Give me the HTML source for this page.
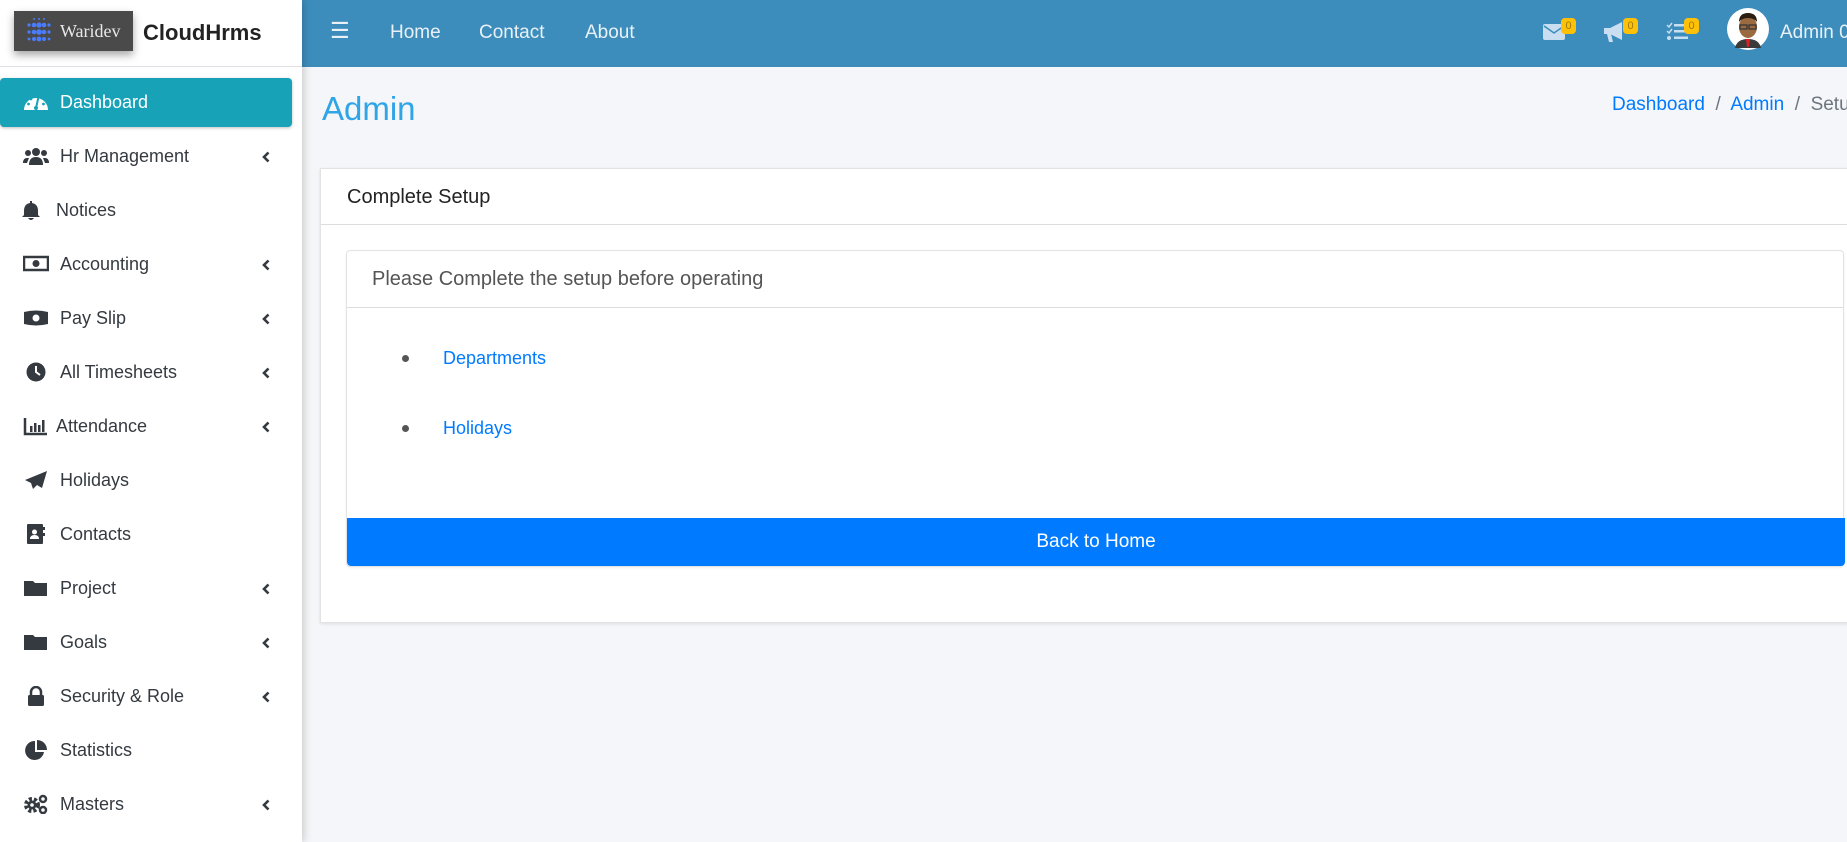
<!DOCTYPE html>
<html><head><meta charset="utf-8"><style>
*{box-sizing:border-box;margin:0;padding:0}
body{width:1847px;height:842px;overflow:hidden;background:#f4f6f9;font-family:"Liberation Sans",sans-serif;position:relative;color:#343a40}
.side{position:absolute;left:0;top:0;width:302px;height:842px;background:#fff;box-shadow:2px 0 8px rgba(0,0,0,.18);z-index:2}
.brand{height:67px;border-bottom:1px solid #dee2e6;position:relative}
.logo{position:absolute;left:14px;top:11px;width:119px;height:40px;background:#4a4a4a;box-shadow:0 4px 8px rgba(0,0,0,.35);color:#e8e8e8;font-family:"Liberation Serif",serif;font-size:18px;line-height:40px;padding-left:46px}
.logo svg{position:absolute;left:10px;top:6px}
.bname{position:absolute;left:143px;top:20px;font-size:22px;font-weight:bold;color:#222}
.item{position:absolute;left:0;width:292px;height:49px;font-size:18px;line-height:49px;color:#343a40}
.item .ic{position:absolute;left:23px;top:14px;width:26px;height:20px}
.item .t{position:absolute;left:60px}
.item .ch{position:absolute;left:262px;top:19px;width:8px;height:12px}
.active{background:#17a2b8;color:#fff;border-radius:4px;box-shadow:0 1px 3px rgba(0,0,0,.25)}
.nav{position:absolute;left:302px;top:0;right:0;height:67px;background:#3d8dbc;color:#eef;font-size:19px}
.nav span{position:absolute;top:22px;color:#e9f1f7;white-space:nowrap}
.badge{position:absolute;background:#ffc107;color:#9a7a10;font-size:11px;width:15px;height:16px;border-radius:4px;text-align:center;line-height:16px}
h1{position:absolute;left:322px;top:90px;font-weight:normal;font-size:33px;color:#2fa4e7}
.bc{position:absolute;left:1612px;top:94px;font-size:19px;color:#6c757d;white-space:nowrap}
.bc a{color:#007bff;text-decoration:none}
.card{position:absolute;left:320px;top:168px;width:1540px;height:455px;background:#fff;border:1px solid #e3e3e3;box-shadow:0 1px 3px rgba(0,0,0,.1)}
.ch1{height:56px;border-bottom:1px solid #ddd;padding:17px 26px;font-size:20px;color:#222}
.inner{position:absolute;left:25px;top:81px;width:1498px;height:317px;border:1px solid #e3e3e3;border-radius:4px;box-shadow:0 1px 2px rgba(0,0,0,.06)}
.ih{height:57px;border-bottom:1px solid #ddd;padding:17px 25px;font-size:20px;color:#555}
.li{position:absolute;left:96px;font-size:18px;color:#007bff}
.dot{position:absolute;left:55px;width:7px;height:7px;border-radius:50%;background:#555}
.btn{position:absolute;left:0;top:267px;width:1498px;height:48px;background:#007bff;border-radius:0 0 4px 4px;color:#fff;text-align:center;line-height:48px;font-size:19px}
</style></head><body>
<svg width="0" height="0" style="position:absolute"><defs><symbol id="chev" viewBox="0 0 8 12"><path d="M6.5 1.5L2 6l4.5 4.5" stroke="#343a40" stroke-width="2.6" fill="none"/></symbol></defs></svg>
<div class="side">
 <div class="brand"><div class="logo"><svg width="30" height="28" viewBox="0 0 30 28"><g fill="#4a7cff"><circle cx="5" cy="8" r="1.6"/><circle cx="10" cy="8" r="2.3"/><circle cx="15" cy="8" r="2.6"/><circle cx="20" cy="8" r="2.3"/><circle cx="25" cy="8" r="1.6"/><circle cx="5" cy="15" r="1.6"/><circle cx="10" cy="15" r="2.3"/><circle cx="15" cy="15" r="2.8"/><circle cx="20" cy="15" r="2.3"/><circle cx="25" cy="15" r="1.6"/><circle cx="5" cy="22" r="1.4"/><circle cx="10" cy="22" r="2"/><circle cx="15" cy="22" r="2.4"/><circle cx="20" cy="22" r="2"/><circle cx="25" cy="22" r="1.4"/><circle cx="10" cy="2" r="1"/><circle cx="15" cy="2" r="1"/><circle cx="20" cy="2" r="1"/></g></svg>Waridev</div><div class="bname">CloudHrms</div></div>
 <div class="item active" style="top:78px"><svg class="ic" viewBox="0 0 26 20"><path d="M1 18A12 12 0 1 1 25 18Z" fill="#fff"/><path d="M13 16L15.5 5" stroke="#17a2b8" stroke-width="2"/><circle cx="13" cy="16" r="2" fill="#17a2b8"/><circle cx="5.5" cy="12" r="1.4" fill="#17a2b8"/><circle cx="8" cy="7" r="1.4" fill="#17a2b8"/><circle cx="20.5" cy="12" r="1.4" fill="#17a2b8"/></svg><span class="t">Dashboard</span></div>
 <div class="item" style="top:132px"><svg class="ic" viewBox="0 0 26 20"><g fill="#343a40"><circle cx="13" cy="6" r="4"/><circle cx="5" cy="7" r="3"/><circle cx="21" cy="7" r="3"/><path d="M6 19q0-8 7-8t7 8z"/><path d="M0 17q0-6 6-5l-2 5zM26 17q0-6-6-5l2 5z"/></g></svg><span class="t">Hr Management</span><svg class="ch"><use href="#chev"/></svg></div>
 <div class="item" style="top:186px"><svg class="ic" viewBox="0 0 26 20" style="left:20px"><path d="M10 1h2v2q6 1 6 8v4l2 2H2l2-2v-4q0-7 6-8z M8 18h6q-3 4-6 0z" fill="#343a40"/></svg><span class="t" style="left:56px">Notices</span></div>
 <div class="item" style="top:240px"><svg class="ic" viewBox="0 0 26 20"><rect x="1" y="3" width="24" height="13" fill="none" stroke="#343a40" stroke-width="2.5"/><circle cx="13" cy="9.5" r="3.5" fill="#343a40"/></svg><span class="t">Accounting</span><svg class="ch"><use href="#chev"/></svg></div>
 <div class="item" style="top:294px"><svg class="ic" viewBox="0 0 26 20"><path d="M1 4q12 -3 24 0v12q-12 3-24 0z" fill="#343a40"/><circle cx="13" cy="10" r="3.5" fill="#fff"/></svg><span class="t">Pay Slip</span><svg class="ch"><use href="#chev"/></svg></div>
 <div class="item" style="top:348px"><svg class="ic" viewBox="0 0 26 20"><circle cx="13" cy="10" r="9.5" fill="#343a40"/><path d="M13 4v6l4 3" stroke="#fff" stroke-width="2" fill="none"/></svg><span class="t">All Timesheets</span><svg class="ch"><use href="#chev"/></svg></div>
 <div class="item" style="top:402px"><svg class="ic" viewBox="0 0 26 20"><path d="M2 2v16h22" stroke="#343a40" stroke-width="2.5" fill="none"/><g fill="#343a40"><rect x="7" y="10" width="2.5" height="6"/><rect x="11" y="7" width="2.5" height="9"/><rect x="15" y="9" width="2.5" height="7"/><rect x="19" y="4" width="2.5" height="12"/></g></svg><span class="t" style="left:56px">Attendance</span><svg class="ch"><use href="#chev"/></svg></div>
 <div class="item" style="top:456px"><svg class="ic" viewBox="0 0 26 20"><path d="M24 1L2 10l6 3 2 6 4-4 5 3z" fill="#343a40"/></svg><span class="t">Holidays</span></div>
 <div class="item" style="top:510px"><svg class="ic" viewBox="0 0 26 20"><rect x="4" y="0" width="16" height="20" rx="1" fill="#343a40"/><circle cx="11.5" cy="8" r="2.5" fill="#fff"/><path d="M7 15q0-4 4.5-4t4.5 4z" fill="#fff"/><rect x="20" y="3" width="2" height="3" fill="#343a40"/><rect x="20" y="9" width="2" height="3" fill="#343a40"/></svg><span class="t">Contacts</span></div>
 <div class="item" style="top:564px"><svg class="ic" viewBox="0 0 26 20"><path d="M1 3h9l2 2h12v13H1z" fill="#343a40"/></svg><span class="t">Project</span><svg class="ch"><use href="#chev"/></svg></div>
 <div class="item" style="top:618px"><svg class="ic" viewBox="0 0 26 20"><path d="M1 3h9l2 2h12v13H1z" fill="#343a40"/></svg><span class="t">Goals</span><svg class="ch"><use href="#chev"/></svg></div>
 <div class="item" style="top:672px"><svg class="ic" viewBox="0 0 26 20"><path d="M8 9V6a5 5 0 0 1 10 0v3" stroke="#343a40" stroke-width="2.5" fill="none"/><rect x="5" y="9" width="16" height="11" rx="1.5" fill="#343a40"/></svg><span class="t">Security &amp; Role</span><svg class="ch"><use href="#chev"/></svg></div>
 <div class="item" style="top:726px"><svg class="ic" viewBox="0 0 26 20"><path d="M12 1A9.5 9.5 0 1 0 21 12H12z" fill="#343a40"/><path d="M14 0v10h10A10 10 0 0 0 14 0z" fill="#343a40"/></svg><span class="t">Statistics</span></div>
 <div class="item" style="top:780px"><svg class="ic" viewBox="0 0 26 20"><circle cx="9" cy="11" r="6" fill="none" stroke="#343a40" stroke-width="4" stroke-dasharray="3 2"/><circle cx="9" cy="11" r="4.5" fill="#343a40"/><circle cx="9" cy="11" r="1.8" fill="#fff"/><circle cx="20" cy="5" r="3" fill="none" stroke="#343a40" stroke-width="2.5"/><circle cx="20" cy="16" r="3" fill="none" stroke="#343a40" stroke-width="2.5"/></svg><span class="t">Masters</span><svg class="ch"><use href="#chev"/></svg></div>
</div>
<div class="nav">
 <span style="left:28px;font-size:22px;top:18px">☰</span>
 <span style="left:88px">Home</span><span style="left:177px">Contact</span><span style="left:283px">About</span>
 <svg style="position:absolute;left:1241px;top:24px" width="22" height="16" viewBox="0 0 22 16"><rect width="22" height="16" rx="2" fill="#c9def0"/><path d="M1 2l10 7 10-7" stroke="#3d8dbc" stroke-width="1.5" fill="none"/></svg>
 <div class="badge" style="left:1259px;top:18px">0</div>
 <svg style="position:absolute;left:1301px;top:22px" width="24" height="22" viewBox="0 0 24 22"><path d="M1 6h6l12-6v18L7 12H1z" fill="#c9def0"/><path d="M4 12h4l2 8H6z" fill="#c9def0"/></svg>
 <div class="badge" style="left:1321px;top:18px">0</div>
 <svg style="position:absolute;left:1364px;top:22px" width="22" height="18" viewBox="0 0 22 18"><g fill="#c9def0"><path d="M1 3l2 2 3-4" stroke="#c9def0" stroke-width="1.5" fill="none"/><path d="M1 9l2 2 3-4" stroke="#c9def0" stroke-width="1.5" fill="none"/><circle cx="3" cy="16" r="2"/><rect x="8" y="2" width="14" height="2.5"/><rect x="8" y="8" width="14" height="2.5"/><rect x="8" y="14.5" width="14" height="2.5"/></g></svg>
 <div class="badge" style="left:1382px;top:18px">0</div>
 <svg style="position:absolute;left:1425px;top:8px" width="42" height="42" viewBox="0 0 42 42"><circle cx="21" cy="21" r="21" fill="#fff"/><path d="M8 40q2-9 13-9t13 9" fill="#3a3a3a"/><path d="M19 31h4l-1 8h-2z" fill="#e02020"/><ellipse cx="21" cy="19" rx="9" ry="11" fill="#9a6a40"/><path d="M12 14q0-9 9-9t9 9q-3-4-9-4t-9 4z" fill="#2b1d12"/><rect x="13" y="17" width="7" height="4" fill="none" stroke="#333" stroke-width="1.2"/><rect x="22" y="17" width="7" height="4" fill="none" stroke="#333" stroke-width="1.2"/></svg>
 <span style="left:1478px">Admin 0</span>
</div>
<h1>Admin</h1>
<div class="bc"><a>Dashboard</a> &nbsp;/&nbsp; <a>Admin</a> &nbsp;/&nbsp; Setup</div>
<div class="card">
 <div class="ch1">Complete Setup</div>
 <div class="inner">
  <div class="ih">Please Complete the setup before operating</div>
  <div class="dot" style="top:104px"></div><div class="li" style="top:97px">Departments</div>
  <div class="dot" style="top:174px"></div><div class="li" style="top:167px">Holidays</div>
  <div class="btn">Back to Home</div>
 </div>
</div>
</body></html>
